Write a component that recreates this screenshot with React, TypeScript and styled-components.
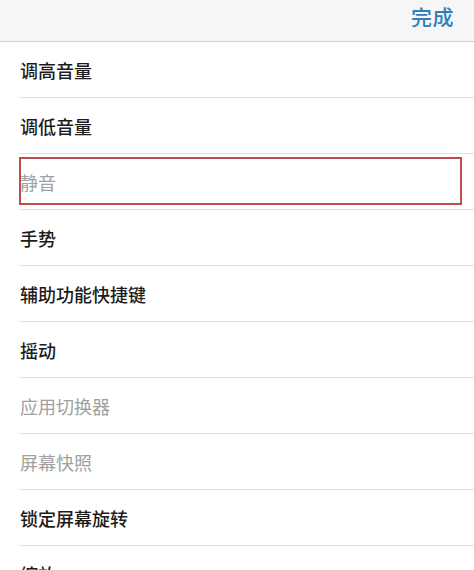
import styled, { createGlobalStyle } from "styled-components";

const GlobalStyle = createGlobalStyle`
  html, body {
    margin: 0;
    padding: 0;
    background: #ffffff;
    overflow: hidden;
  }
  body {
    font-family: "Noto Sans CJK SC", "Noto Sans", sans-serif;
  }
`;

type Item = { label: string; disabled?: boolean; marked?: boolean };

const items: Item[] = [
  { label: "调高音量" },
  { label: "调低音量" },
  { label: "静音", disabled: true, marked: true },
  { label: "手势" },
  { label: "辅助功能快捷键" },
  { label: "摇动" },
  { label: "应用切换器", disabled: true },
  { label: "屏幕快照", disabled: true },
  { label: "锁定屏幕旋转" },
  { label: "缩放" },
];

function App() {
  return (
    <Screen>
      <GlobalStyle />
      <Header>
        <DoneButton>完成</DoneButton>
      </Header>
      <List>
        {items.map((item) => (
          <Row key={item.label}>
            <Label $disabled={item.disabled}>{item.label}</Label>
            {item.marked && <Highlight />}
          </Row>
        ))}
      </List>
    </Screen>
  );
}

const Screen = styled.div`
  width: 474px;
  height: 570px;
  overflow: hidden;
  background: #ffffff;
`;

const Header = styled.header`
  height: 41px;
  display: flex;
  justify-content: flex-end;
  align-items: center;
  padding: 0 20px;
  background: #f6f6f6;
  border-bottom: 1px solid #cfcfcf;
  box-sizing: content-box;
`;

const DoneButton = styled.span`
  font-size: 21px;
  font-weight: 500;
  color: #2f7fbd;
  margin-top: -9px;
  letter-spacing: 0.5px;
`;

const List = styled.ul`
  list-style: none;
  margin: 0;
  padding: 0 0 0 19px;
`;

const Row = styled.li`
  position: relative;
  height: 55px;
  display: flex;
  align-items: center;
  padding-left: 1px;
  border-bottom: 1px solid #e2e2e2;
`;

const Label = styled.span<{ $disabled?: boolean }>`
  font-size: 18px;
  font-weight: ${(p) => (p.$disabled ? 400 : 500)};
  line-height: 1;
  color: ${(p) => (p.$disabled ? "#a0a0a0" : "#1c1c1c")};
`;

const Highlight = styled.div`
  position: absolute;
  left: 0;
  right: 12px;
  top: 3px;
  bottom: 4px;
  border: 2px solid #c24b4b;
  pointer-events: none;
`;

export default App;
